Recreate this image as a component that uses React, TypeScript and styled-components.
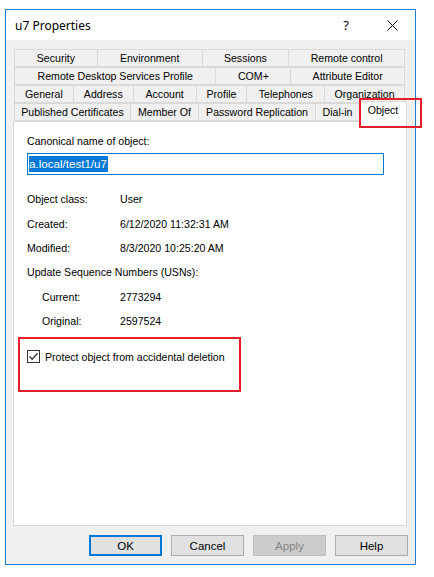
import React from 'react';
import styled, { createGlobalStyle } from 'styled-components';

const GlobalStyle = createGlobalStyle`
  html, body {
    margin: 0;
    padding: 0;
    background: #ffffff;
  }
  body {
    font-family: "Liberation Sans", Arial, sans-serif;
    font-size: 10.6px;
    color: #000000;
  }
`;

const Page = styled.div`
  width: 434px;
  height: 577px;
  padding: 9px 0 0 5px;
  box-sizing: border-box;
`;

const Window = styled.div`
  position: relative;
  width: 411px;
  height: 556px;
  box-sizing: border-box;
  border: 1px solid #1a7fd4;
  background: #f0f0f0;
  display: flex;
  flex-direction: column;
`;

const TitleBar = styled.div`
  height: 30px;
  background: #ffffff;
  display: flex;
  align-items: center;
  padding-left: 9px;
`;

const Title = styled.div`
  flex: 1;
  font-family: "Noto Sans", "Liberation Sans", sans-serif;
  font-size: 12px;
  padding-top: 1px;
`;

const TitleButton = styled.div<{ $w: number }>`
  width: ${p => p.$w}px;
  height: 30px;
  display: flex;
  align-items: center;
  justify-content: center;
  font-family: "Noto Sans", "Liberation Sans", sans-serif;
  font-size: 13px;
`;

const Body = styled.div`
  flex: 1;
  padding: 9px 8px 0 7px;
  display: flex;
  flex-direction: column;
`;

const TabStrip = styled.div`
  margin-left: 1px;
  width: 391px;
  display: flex;
  flex-direction: column;
`;

const TabRow = styled.div`
  display: flex;
  height: 18px;
  align-items: flex-end;
`;

const Tab = styled.div<{ $w: number; $selected?: boolean }>`
  width: ${p => p.$w}px;
  height: ${p => (p.$selected ? 21 : 18)}px;
  box-sizing: border-box;
  border: 1px solid #d9d9d9;
  border-bottom: ${p => (p.$selected ? 'none' : '1px solid #d9d9d9')};
  margin-left: -1px;
  margin-right: ${p => (p.$selected ? -2 : 0)}px;
  margin-bottom: ${p => (p.$selected ? -1 : 0)}px;
  background: ${p => (p.$selected ? '#ffffff' : '#f0f0f0')};
  display: flex;
  align-items: ${p => (p.$selected ? 'flex-start' : 'center')};
  padding-top: ${p => (p.$selected ? 2 : 0)}px;
  justify-content: center;
  white-space: nowrap;
  position: relative;
  z-index: ${p => (p.$selected ? 2 : 1)};
  &:first-child {
    margin-left: 0;
  }
`;

const Panel = styled.div`
  width: 394px;
  height: 405px;
  box-sizing: border-box;
  background: #ffffff;
  border: 1px solid #d9d9d9;
  padding: 12px 0 0 13px;
  display: flex;
  flex-direction: column;
`;

const Label = styled.div`
  height: 14px;
  line-height: 14px;
`;

const NameField = styled.div`
  margin-top: 5px;
  width: 357px;
  height: 22px;
  box-sizing: border-box;
  border: 1px solid #0078d7;
  display: flex;
  align-items: center;
  padding-left: 1px;
`;

const Selection = styled.span`
  background: #0078d7;
  color: #ffffff;
  font-size: 11.6px;
  line-height: 16px;
  padding: 0 1px 0 0;
`;

const InfoList = styled.div`
  margin-top: 12px;
  display: flex;
  flex-direction: column;
`;

const InfoRow = styled.div<{ $indent?: number }>`
  height: 24.4px;
  display: flex;
  align-items: center;
  padding-left: ${p => p.$indent || 0}px;
`;

const InfoLabel = styled.div<{ $indent?: number }>`
  width: ${p => 93 - (p.$indent || 0)}px;
`;

const CheckRow = styled.div`
  margin-top: 17px;
  display: flex;
  align-items: center;
  gap: 5px;
`;

const CheckBox = styled.div`
  width: 13px;
  height: 13px;
  box-sizing: border-box;
  border: 1px solid #333333;
  background: #ffffff;
  display: flex;
  align-items: center;
  justify-content: center;
`;

const ButtonBar = styled.div`
  display: flex;
  justify-content: flex-end;
  gap: 9px;
  margin-top: 9px;
  width: 395px;
`;

const Button = styled.div<{ $default?: boolean; $disabled?: boolean }>`
  width: 73px;
  height: 21px;
  box-sizing: border-box;
  border: ${p => (p.$default ? '2px solid #0078d7' : p.$disabled ? '1px solid #bfbfbf' : '1px solid #adadad')};
  background: ${p => (p.$disabled ? '#cccccc' : '#e1e1e1')};
  color: ${p => (p.$disabled ? '#838383' : '#000000')};
  display: flex;
  align-items: center;
  justify-content: center;
  font-size: 11.5px;
`;

const Callout = styled.div<{ $x: number; $y: number; $w: number; $h: number }>`
  position: absolute;
  left: ${p => p.$x}px;
  top: ${p => p.$y}px;
  width: ${p => p.$w}px;
  height: ${p => p.$h}px;
  box-sizing: border-box;
  border: 2px solid #e81c2a;
  pointer-events: none;
  z-index: 5;
`;

const tabRows: { label: string; w: number; selected?: boolean }[][] = [
  [
    { label: 'Security', w: 84 },
    { label: 'Environment', w: 106 },
    { label: 'Sessions', w: 88 },
    { label: 'Remote control', w: 117 },
  ],
  [
    { label: 'Remote Desktop Services Profile', w: 203 },
    { label: 'COM+', w: 76 },
    { label: 'Attribute Editor', w: 115 },
  ],
  [
    { label: 'General', w: 60 },
    { label: 'Address', w: 61 },
    { label: 'Account', w: 64 },
    { label: 'Profile', w: 52 },
    { label: 'Telephones', w: 79 },
    { label: 'Organization', w: 81 },
  ],
  [
    { label: 'Published Certificates', w: 117 },
    { label: 'Member Of', w: 69 },
    { label: 'Password Replication', w: 118 },
    { label: 'Dial-in', w: 45 },
    { label: 'Object', w: 48, selected: true },
  ],
];

const info = [
  { label: 'Object class:', value: 'User' },
  { label: 'Created:', value: '6/12/2020 11:32:31 AM' },
  { label: 'Modified:', value: '8/3/2020 10:25:20 AM' },
];

export default function App() {
  return (
    <Page>
      <GlobalStyle />
      <Window>
        <TitleBar>
          <Title>u7 Properties</Title>
          <TitleButton $w={46}>?</TitleButton>
          <TitleButton $w={46}>
            <svg width="11" height="11" viewBox="0 0 11 11">
              <path d="M0.5 0.5 L10.5 10.5 M10.5 0.5 L0.5 10.5" stroke="#000" strokeWidth="1" />
            </svg>
          </TitleButton>
        </TitleBar>
        <Body>
          <TabStrip>
            {tabRows.map((row, i) => (
              <TabRow key={i}>
                {row.map(t => (
                  <Tab key={t.label} $w={t.w} $selected={t.selected}>
                    {t.label}
                  </Tab>
                ))}
              </TabRow>
            ))}
          </TabStrip>
          <Panel>
            <Label>Canonical name of object:</Label>
            <NameField>
              <Selection>a.local/test1/u7</Selection>
            </NameField>
            <InfoList>
              {info.map(r => (
                <InfoRow key={r.label}>
                  <InfoLabel>{r.label}</InfoLabel>
                  <div>{r.value}</div>
                </InfoRow>
              ))}
              <InfoRow>Update Sequence Numbers (USNs):</InfoRow>
              <InfoRow $indent={15}>
                <InfoLabel $indent={15}>Current:</InfoLabel>
                <div>2773294</div>
              </InfoRow>
              <InfoRow $indent={15}>
                <InfoLabel $indent={15}>Original:</InfoLabel>
                <div>2597524</div>
              </InfoRow>
            </InfoList>
            <CheckRow>
              <CheckBox>
                <svg width="11" height="11" viewBox="0 0 11 11">
                  <path d="M1.5 5.5 L4.2 8.3 L9.5 2.2" fill="none" stroke="#333" strokeWidth="1.3" />
                </svg>
              </CheckBox>
              <div>Protect object from accidental deletion</div>
            </CheckRow>
          </Panel>
          <ButtonBar>
            <Button $default>OK</Button>
            <Button>Cancel</Button>
            <Button $disabled>Apply</Button>
            <Button>Help</Button>
          </ButtonBar>
        </Body>
        <Callout $x={353} $y={88} $w={63} $h={30} />
        <Callout $x={12} $y={327} $w={223} $h={55} />
      </Window>
    </Page>
  );
}
